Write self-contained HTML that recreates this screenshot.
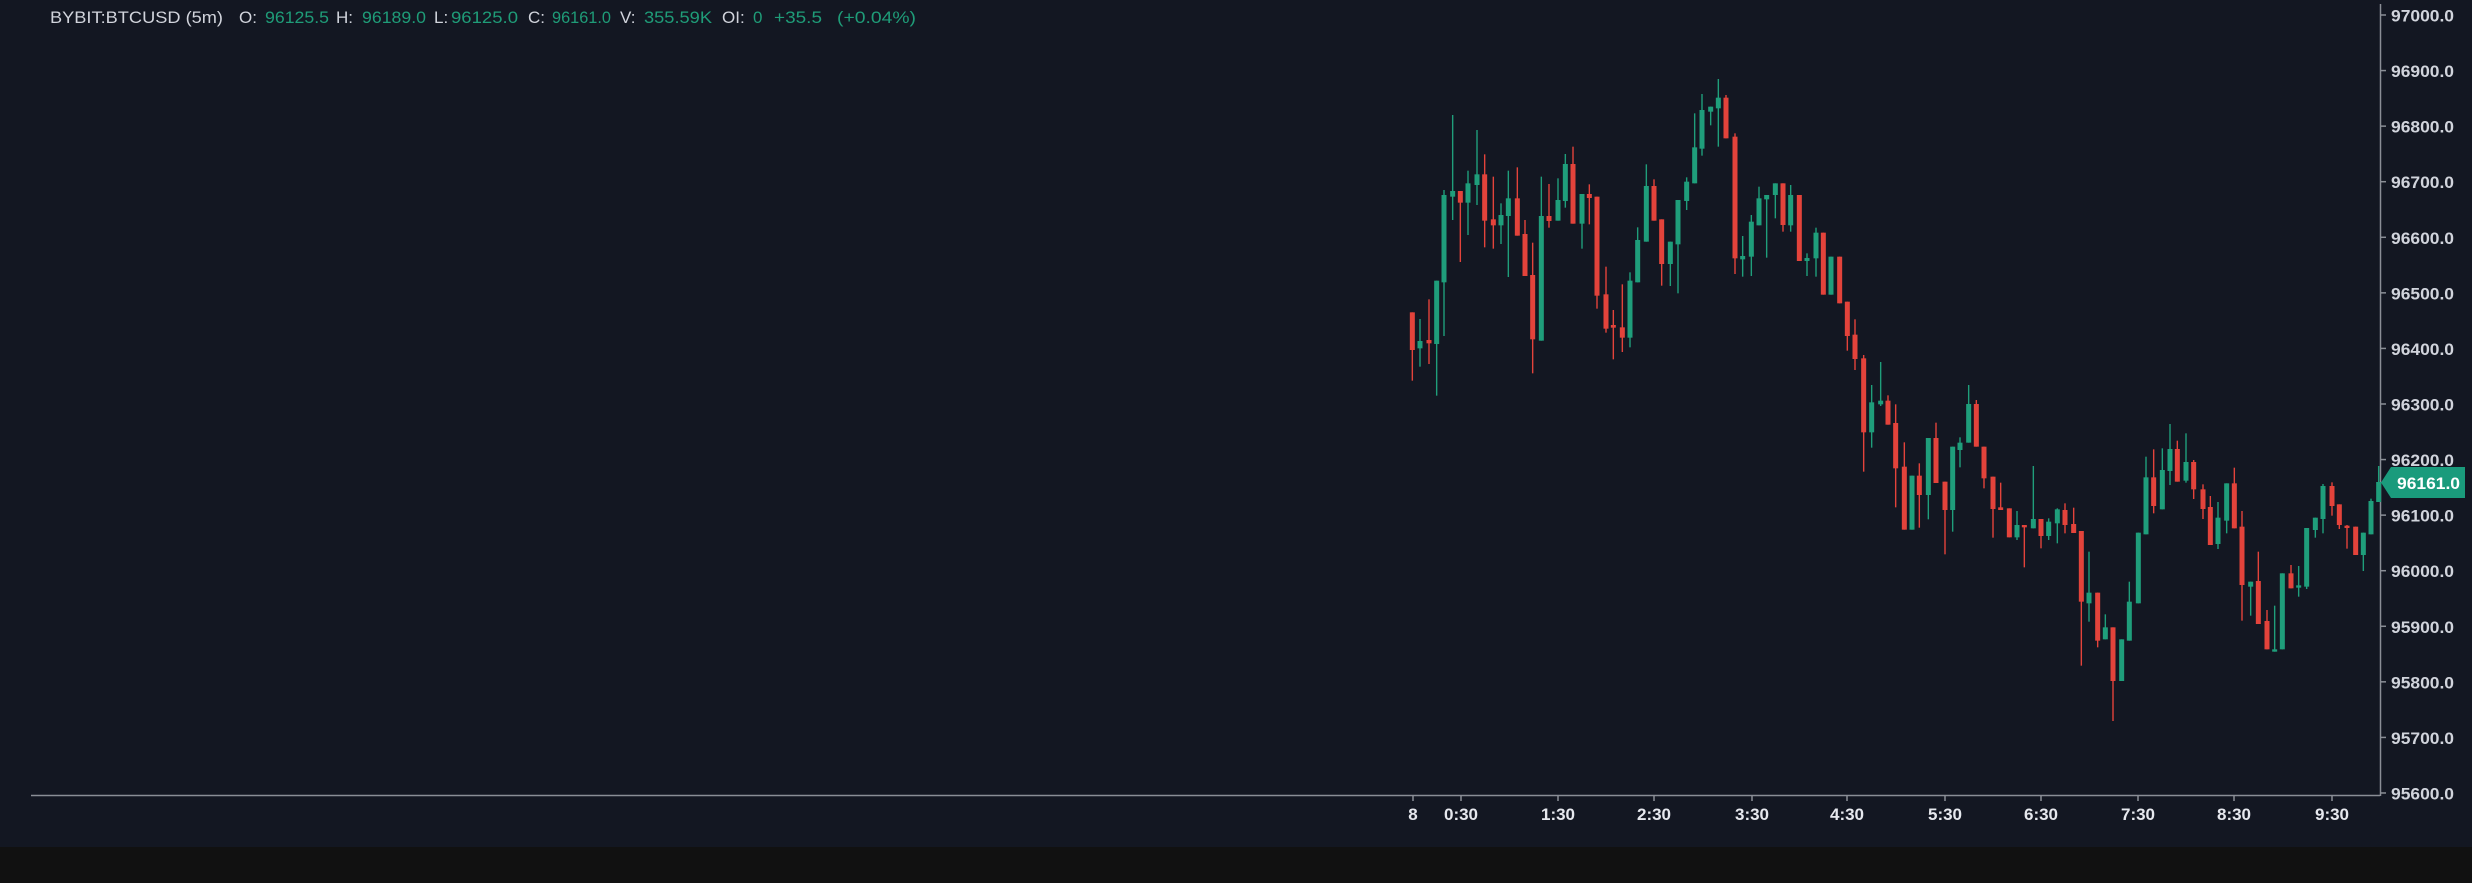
<!DOCTYPE html>
<html><head><meta charset="utf-8"><style>
html,body{margin:0;padding:0;background:#131722;width:2472px;height:883px;overflow:hidden}
svg{display:block}
</style></head><body>
<svg id="s" width="2472" height="883" xmlns="http://www.w3.org/2000/svg" font-family="Liberation Sans, sans-serif">
<rect x="0" y="0" width="2472" height="847" fill="#131722"/>
<rect x="0" y="847" width="2472" height="36" fill="#111111"/>
<line x1="31" y1="795.5" x2="2380" y2="795.5" stroke="#8a8e96" stroke-width="1.5"/>
<line x1="2380.5" y1="4" x2="2380.5" y2="796" stroke="#8a8e96" stroke-width="1.5"/>
<g id="hdr" font-size="17">
<text x="50" y="23" fill="#d1d4dc" textLength="173" lengthAdjust="spacingAndGlyphs">BYBIT:BTCUSD (5m)</text>
<text x="239" y="23" fill="#d1d4dc">O:</text><text x="265" y="23" fill="#1f9c78" textLength="64" lengthAdjust="spacingAndGlyphs">96125.5</text>
<text x="336" y="23" fill="#d1d4dc">H:</text><text x="362" y="23" fill="#1f9c78" textLength="64" lengthAdjust="spacingAndGlyphs">96189.0</text>
<text x="434" y="23" fill="#d1d4dc">L:</text><text x="451" y="23" fill="#1f9c78" textLength="67" lengthAdjust="spacingAndGlyphs">96125.0</text>
<text x="528" y="23" fill="#d1d4dc">C:</text><text x="552" y="23" fill="#1f9c78" textLength="59" lengthAdjust="spacingAndGlyphs">96161.0</text>
<text x="620" y="23" fill="#d1d4dc">V:</text><text x="644" y="23" fill="#1f9c78" textLength="68" lengthAdjust="spacingAndGlyphs">355.59K</text>
<text x="722" y="23" fill="#d1d4dc">OI:</text><text x="753" y="23" fill="#1f9c78">0</text>
<text x="774" y="23" fill="#1f9c78" textLength="48" lengthAdjust="spacingAndGlyphs">+35.5</text>
<text x="837" y="23" fill="#1f9c78" textLength="79" lengthAdjust="spacingAndGlyphs">(+0.04%)</text>
</g>
<g id="axis"></g>
<g id="candles"></g>
<polygon points="2381,482.5 2391,467 2465,467 2465,498 2391,498" fill="#1a9b7c"/>
<text x="2397" y="489" fill="#ffffff" font-size="17" font-weight="bold" textLength="63" lengthAdjust="spacingAndGlyphs">96161.0</text>
</svg>
<script>
var NS="http://www.w3.org/2000/svg";
function el(p,t,a,txt){var e=document.createElementNS(NS,t);for(var k in a)e.setAttribute(k,a[k]);if(txt)e.textContent=txt;p.appendChild(e);return e;}
var ax=document.getElementById('axis');
for(var i=0;i<15;i++){var y=15+i*55.57;var v=(97000-i*100).toFixed(1);
el(ax,'line',{x1:2380,y1:y,x2:2386,y2:y,stroke:'#8a8e96','stroke-width':1.5});
el(ax,'text',{x:2391,y:y+6.5,fill:'#d1d4dc','font-size':17,'font-weight':'bold',textLength:63,lengthAdjust:'spacingAndGlyphs'},v);}
var tl=[[1413,'8'],[1461,'0:30'],[1558,'1:30'],[1654,'2:30'],[1752,'3:30'],[1847,'4:30'],[1945,'5:30'],[2041,'6:30'],[2138,'7:30'],[2234,'8:30'],[2332,'9:30']];
tl.forEach(function(t){el(ax,'line',{x1:t[0],y1:795,x2:t[0],y2:801,stroke:'#8a8e96','stroke-width':1.5});
el(ax,'text',{x:t[0],y:820,fill:'#e6e8ee','font-size':17,'font-weight':'bold','text-anchor':'middle'},t[1]);});
var G='#1f9e7b',R='#e3433b';
var chunks=[
[1400,60,[[37,'r',757,757,870,962],[60,'g',777,843,865,920],[87,'r',718,840,850,912],[110,'g',662,662,852,1007],[132,'g',390,405,667,828],[158,'g',165,393,410,480],[181,'r',393,393,428,606],[204,'g',332,370,428,525],[231,'g',210,343,375,435],[254,'r',283,343,482,562],[280,'r',350,478,496,566],[303,'g',430,465,496,552],[325,'g',332,415,468,651],[352,'r',322,415,527,527],[375,'r',480,522,648,648],[398,'r',548,645,838,940],[424,'g',350,468,842,842],[447,'r',372,468,483,503],[474,'g',355,420,482,482],[496,'g',282,312,423,443],[519,'r',260,312,491,491],[546,'g',402,402,491,566],[568,'r',373,402,414,493],[591,'r',410,410,707,746],[618,'r',620,703,806,818],[640,'r',750,795,803,898],[667,'r',673,802,833,876],[690,'g',637,662,833,862],[713,'g',502,540,667,667],[739,'g',313,378,545,545],[762,'r',358,378,482,482],[785,'r',478,478,612,677],[811,'g',545,545,612,678],[834,'g',420,420,553,700],[860,'g',352,365,423,450],[884,'g',160,262,370,370],[906,'g',102,150,266,287],[932,'g',140,140,155,196],[955,'g',57,113,145,260],[978,'r',105,113,235,235],[1005,'r',220,230,595,642]]],
[1720,160,[[68,'g',228,288,298,350],[94,'g',165,185,290,348],[117,'g',80,115,196,196],[140,'g',105,105,118,293],[166,'g',70,70,105,175],[189,'r',70,70,195,215],[212,'g',75,105,196,215],[238,'r',105,105,303,303],[261,'g',280,294,303,348],[288,'g',203,218,295,350],[310,'r',218,218,404,404],[333,'g',290,290,404,404],[359,'r',290,290,430,430],[382,'r',425,425,528,572],[405,'r',478,524,597,630],[431,'r',585,595,817,935],[455,'g',675,727,817,863],[482,'g',606,722,733,738],[504,'r',706,722,794,794],[527,'r',733,789,925,1042],[553,'r',847,920,1109,1109],[576,'g',947,947,1109,1109],[598,'r',910,947,1005,1103],[625,'g',834,834,1005,1078],[648,'r',788,834,969,969],[675,'r',965,965,1050,1183],[698,'g',860,860,1050,1115],[720,'g',832,848,870,922],[746,'g',675,732,848,848],[769,'r',720,732,860,860],[792,'r',860,860,955,985],[819,'r',950,950,1047,1133],[842,'r',968,1042,1050,1050],[868,'r',1045,1045,1132,1132],[891,'g',1053,1095,1132,1140],[913,'r',1095,1095,1102,1222],[940,'g',918,1077,1105,1105],[963,'r',1077,1077,1128,1165],[986,'g',1075,1085,1128,1140],[1012,'g',1045,1048,1090,1150]]],
[2040,400,[[75,'r',310,330,375,400],[101,'r',323,372,399,399],[124,'r',393,393,605,797],[147,'g',455,578,610,665],[173,'r',578,578,722,742],[196,'g',643,682,718,718],[219,'r',682,682,843,963],[245,'g',718,718,843,843],[268,'g',545,605,722,722],[295,'g',398,398,610,610],[318,'g',170,232,403,403],[341,'r',148,232,318,340],[367,'g',145,210,328,328],[390,'g',72,147,213,255],[412,'r',122,147,245,245],[438,'g',100,186,242,248],[461,'r',180,186,268,297],[489,'r',253,268,327,357],[511,'r',288,321,435,435],[534,'g',306,353,432,447],[560,'g',250,250,362,400],[583,'r',203,250,385,385],[606,'r',333,380,555,662],[632,'g',545,545,560,647],[655,'r',455,543,672,672],[681,'r',630,663,748,748],[704,'g',617,748,755,755],[727,'g',520,520,748,748],[753,'r',495,520,565,565],[776,'g',498,556,563,590],[800,'g',384,384,560,567],[826,'g',353,353,390,413],[849,'g',252,258,357,400],[876,'r',247,258,318,347],[898,'r',313,313,375,387],[921,'r',375,377,384,446],[947,'r',380,380,465,465],[970,'g',398,398,465,513],[993,'g',296,303,403,403],[1016,'g',198,246,306,306]]]];
var cg=document.getElementById('candles');
chunks.forEach(function(c){var x0=c[0],y0=c[1];c[2].forEach(function(d){
var x=x0+d[0]/3,col=d[1]=='g'?G:R;var wt=y0+d[2]/3,bt=y0+d[3]/3,bb=y0+d[4]/3,wb=y0+d[5]/3;
el(cg,'rect',{x:x-0.7,y:wt,width:1.4,height:Math.max(wb-wt,1),fill:col});
el(cg,'rect',{x:x-2.5,y:bt,width:5,height:Math.max(bb-bt,1.5),fill:col});});});
</script>
</body></html>
